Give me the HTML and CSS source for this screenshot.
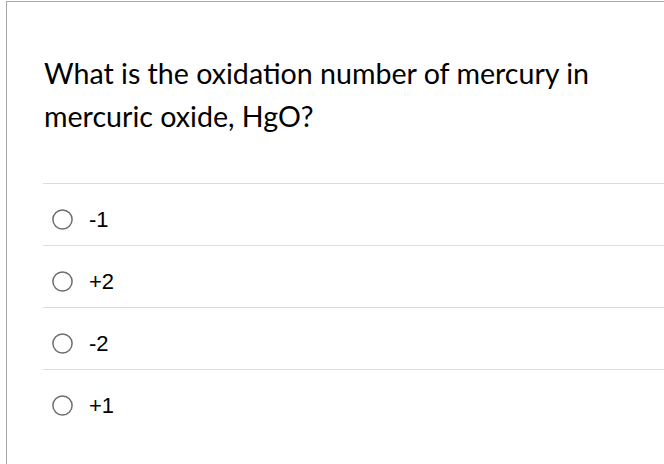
FILE: index.html
```html
<!DOCTYPE html>
<html>
<head>
<meta charset="utf-8">
<link rel="stylesheet" href="styles.css">
</head>
<body>
<div class="panel">
  <div class="question">What is the oxidation number of mercury in mercuric oxide, HgO?</div>
  <ul class="answers">
    <li class="answer"><svg class="radio" viewBox="0 0 21 21"><circle cx="10.5" cy="10.5" r="9.6"/></svg><span class="label">-1</span></li>
    <li class="answer"><svg class="radio" viewBox="0 0 21 21"><circle cx="10.5" cy="10.5" r="9.6"/></svg><span class="label">+2</span></li>
    <li class="answer"><svg class="radio" viewBox="0 0 21 21"><circle cx="10.5" cy="10.5" r="9.6"/></svg><span class="label">-2</span></li>
    <li class="answer"><svg class="radio" viewBox="0 0 21 21"><circle cx="10.5" cy="10.5" r="9.6"/></svg><span class="label">+1</span></li>
  </ul>
</div>
</body>
</html>
```
FILE: styles.css
```css
html, body {
  margin: 0;
  padding: 0;
  background: #fff;
}
.panel {
  margin: 1px 0 0 6px;
  border-top: 1px solid #a9a9a9;
  border-left: 1px solid #a9a9a9;
  height: 463px;
  padding-left: 36px;
  box-sizing: border-box;
}
.question {
  font-family: Lato, "Liberation Sans", sans-serif;
  font-size: 28.6px;
  line-height: 43px;
  color: #000;
  padding: 50px 10px 0 1px;
  margin-bottom: 45px;
}
.answers {
  list-style: none;
  margin: 0;
  padding: 0;
}
.answer {
  display: flex;
  align-items: center;
  height: 62px;
  padding-top: 10px;
  border-top: 1px solid #dcdcdc;
  box-sizing: border-box;
  font-family: "Liberation Sans", Arial, sans-serif;
  font-size: 22px;
  color: #000;
}
.radio {
  width: 21px;
  height: 21px;
  margin: 0 16px 0 9px;
  flex: none;
}
.radio circle {
  fill: #fff;
  stroke: #6e6e6e;
  stroke-width: 1.5;
}
```
